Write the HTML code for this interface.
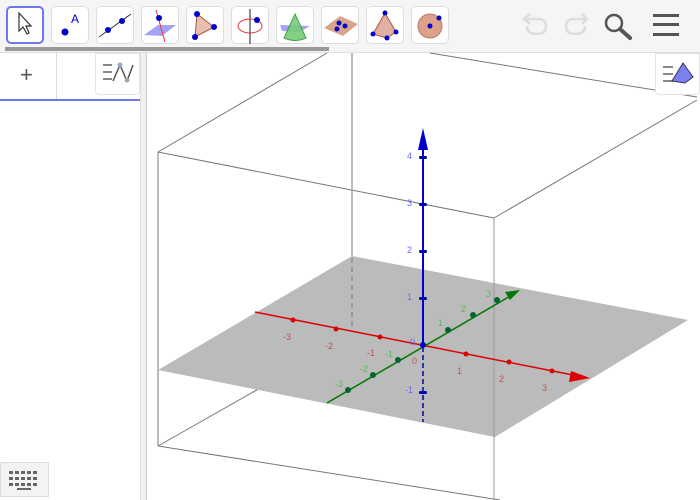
<!DOCTYPE html>
<html><head><style>
body{margin:0;width:700px;height:500px;overflow:hidden;background:#fff;font-family:"Liberation Sans",sans-serif;position:relative}
.tb{position:absolute;left:0;top:0;width:700px;height:52px;background:#f5f5f5;border-bottom:1px solid #ddd}
.btn{position:absolute;top:6px;width:38px;height:38px;background:#fff;border:1px solid #ddd;border-radius:5px;box-sizing:border-box}
</style></head><body>
<div class="tb"></div>
<div style="position:absolute;left:5px;top:47px;width:324px;height:4px;background:#999"></div>
<div class="btn" style="left:6px;border:2px solid #6d78f0"></div>
<div class="btn" style="left:51px"></div><div class="btn" style="left:96px"></div><div class="btn" style="left:141px"></div><div class="btn" style="left:186px"></div><div class="btn" style="left:231px"></div><div class="btn" style="left:276px"></div><div class="btn" style="left:321px"></div><div class="btn" style="left:366px"></div><div class="btn" style="left:411px"></div>
<svg style="position:absolute;left:0;top:0" width="700" height="52">
<path d="M19 13 L19 31 L23 27 L27 34 L29 33 L26 26 L31 26 Z" fill="#fff" stroke="#333" stroke-width="1.2"/>
<circle cx="65" cy="32" r="3.5" fill="#00c"/><text x="71" y="23" font-size="12" fill="#00c">A</text>
<line x1="99" y1="37" x2="131" y2="14" stroke="#333"/><circle cx="108" cy="30" r="3" fill="#00c"/><circle cx="122" cy="21" r="3" fill="#00c"/>
<path d="M144 35 L158 25 L176 25 L162 36Z" fill="#8a8ef0" opacity=".8"/><line x1="156" y1="10" x2="165" y2="42" stroke="#e33" stroke-width="1"/><circle cx="159" cy="18" r="3" fill="#00c"/>
<path d="M197 14 L214 27 L195 37Z" fill="#e8c0b0" stroke="#a54" /><circle cx="197" cy="14" r="3" fill="#00c"/><circle cx="214" cy="27" r="3" fill="#00c"/><circle cx="195" cy="37" r="3" fill="#00c"/>
<ellipse cx="250" cy="26" rx="12" ry="7" fill="none" stroke="#e33"/><line x1="250" y1="9" x2="250" y2="44" stroke="#666" stroke-width="1.5"/><circle cx="257" cy="20" r="3" fill="#00c"/>
<path d="M280 25 L310 26 L300 32 L282 31Z" fill="#8a8ef0" opacity=".8"/><path d="M295 14 L284 38 Q295 43 306 38Z" fill="#7c7" stroke="#393" opacity=".9"/>
<path d="M324 28 L340 16 L358 24 L343 36Z" fill="#d9a58a"/><circle cx="339" cy="23" r="2.5" fill="#00c"/><circle cx="345" cy="26" r="2.5" fill="#00c"/><circle cx="337" cy="29" r="2.5" fill="#00c"/>
<path d="M385 13 L373 34 L387 38 L396 32Z" fill="#e0b0a0" stroke="#a54"/><circle cx="385" cy="13" r="2.5" fill="#00c"/><circle cx="373" cy="34" r="2.5" fill="#00c"/><circle cx="387" cy="38" r="2.5" fill="#00c"/><circle cx="396" cy="32" r="2.5" fill="#00c"/>
<circle cx="430" cy="26" r="12" fill="#dda08a" stroke="#b76"/><circle cx="430" cy="26" r="2.5" fill="#00c"/><circle cx="439" cy="18" r="2.5" fill="#00c"/>
<path d="M527 26 Q527 34 537 34 Q546 34 546 26 Q546 19 537 19 L524 19 M530 14 L524 19 L530 24" fill="none" stroke="#ddd" stroke-width="2.5"/>
<path d="M585 26 Q585 34 575 34 Q566 34 566 26 Q566 19 575 19 L587 19 M582 14 L587 19 L582 24" fill="none" stroke="#ddd" stroke-width="2.5"/>
<circle cx="614" cy="23" r="8" fill="none" stroke="#555" stroke-width="2.5"/><line x1="620" y1="29" x2="630" y2="38" stroke="#555" stroke-width="4" stroke-linecap="round"/>
<rect x="653" y="14" width="26" height="3" fill="#555"/><rect x="653" y="23" width="26" height="3" fill="#555"/><rect x="653" y="33" width="26" height="3" fill="#555"/>
</svg>
<div style="position:absolute;left:0;top:99px;width:140px;height:2px;background:#6d78f0"></div>
<div style="position:absolute;left:56px;top:53px;width:1px;height:46px;background:#ddd"></div>
<div style="position:absolute;left:20px;top:62px;font-size:22px;color:#555">+</div>
<div style="position:absolute;left:95px;top:53px;width:45px;height:42px;background:#fff;border:1px solid #e4e4e4;border-radius:0 0 4px 4px;box-sizing:border-box"></div>
<svg style="position:absolute;left:95px;top:53px" width="45" height="42"><g stroke="#888" stroke-width="2"><line x1="8" y1="12" x2="17" y2="12"/><line x1="8" y1="19" x2="17" y2="19"/><line x1="8" y1="26" x2="17" y2="26"/></g><path d="M18 28 L25 12 L32 28 L38 12" fill="none" stroke="#555" stroke-width="1.5"/><circle cx="25" cy="12" r="2.5" fill="#9ab"/><circle cx="32" cy="27" r="2.5" fill="#9ab"/></svg>
<div style="position:absolute;left:140px;top:53px;width:7px;height:447px;background:#f0f0f0;border-left:1px solid #ddd;border-right:1px solid #ccc;box-sizing:border-box"></div>
<div style="position:absolute;left:0;top:462px;width:49px;height:35px;background:#f3f3f3;border:1px solid #ddd;box-sizing:border-box"></div>
<svg style="position:absolute;left:8px;top:470px" width="34" height="20"><g fill="#666"><rect x="1" y="1" width="4" height="3"/><rect x="7" y="1" width="4" height="3"/><rect x="13" y="1" width="4" height="3"/><rect x="19" y="1" width="4" height="3"/><rect x="25" y="1" width="4" height="3"/><rect x="1" y="7" width="4" height="3"/><rect x="7" y="7" width="4" height="3"/><rect x="13" y="7" width="4" height="3"/><rect x="19" y="7" width="4" height="3"/><rect x="25" y="7" width="4" height="3"/><rect x="1" y="13" width="4" height="3"/><rect x="7" y="13" width="4" height="3"/><rect x="13" y="13" width="4" height="3"/><rect x="19" y="13" width="4" height="3"/><rect x="25" y="13" width="4" height="3"/><rect x="9" y="18" width="14" height="2"/></g></svg>
<svg style="position:absolute;left:0;top:0" width="700" height="500">
<g stroke="#777" stroke-width="1" fill="none">
<line x1="158" y1="152" x2="327" y2="53"/>
<line x1="430" y1="53" x2="697" y2="97"/>
<line x1="158" y1="152" x2="494" y2="218"/>
<line x1="494" y1="218" x2="697" y2="100"/>
<line x1="158" y1="152" x2="158" y2="446"/>
<line x1="158" y1="446" x2="500" y2="500"/>
<line x1="158" y1="446" x2="350" y2="337"/>
</g>
<polygon points="158,370 352,256 688,320 495,437" fill="#bbb"/>
<line x1="352" y1="53" x2="352" y2="256" stroke="#999" stroke-width="1.3"/>
<line x1="352" y1="258" x2="352" y2="330" stroke="#888" stroke-width="1.3" stroke-dasharray="5,4"/>
<line x1="494" y1="218" x2="494" y2="500" stroke="#999" stroke-width="1"/>
<line x1="255" y1="312" x2="578" y2="376" stroke="#d00" stroke-width="1.5"/>
<polygon points="590,378 571,371 569,382" fill="#d00"/>
<g fill="#d00"><circle cx="293" cy="320" r="2.5"/><circle cx="336" cy="329" r="2.5"/><circle cx="380" cy="337" r="2.5"/><circle cx="466" cy="354" r="2.5"/><circle cx="509" cy="362" r="2.5"/><circle cx="552" cy="371" r="2.5"/></g>
<g fill="#b55" font-size="9"><text x="283" y="340">-3</text><text x="325" y="349">-2</text><text x="367" y="356">-1</text><text x="412" y="364">0</text><text x="457" y="374">1</text><text x="499" y="382">2</text><text x="542" y="391">3</text></g>
<line x1="327" y1="403" x2="512" y2="295" stroke="#070" stroke-width="1.5"/>
<polygon points="520,290 505,292 510,300" fill="#070"/>
<g fill="#063"><circle cx="348" cy="390" r="3"/><circle cx="373" cy="375" r="3"/><circle cx="398" cy="360" r="3"/><circle cx="448" cy="330" r="3"/><circle cx="473" cy="315" r="3"/><circle cx="497" cy="300" r="3"/></g>
<g fill="#5b5" font-size="9"><text x="335" y="387">-3</text><text x="360" y="372">-2</text><text x="385" y="357">-1</text><text x="438" y="326">1</text><text x="461" y="312">2</text><text x="486" y="297">3</text></g>
<line x1="423" y1="345" x2="423" y2="148" stroke="#00c" stroke-width="2"/>
<polygon points="423,128 418,150 428,150" fill="#00c"/>
<line x1="423" y1="347" x2="423" y2="422" stroke="#33a" stroke-width="2" stroke-dasharray="5,3"/>
<g fill="#00a"><rect x="419" y="156" width="8" height="3" rx="1.5"/><rect x="419" y="203" width="8" height="3" rx="1.5"/><rect x="419" y="250" width="8" height="3" rx="1.5"/><rect x="419" y="297" width="8" height="3" rx="1.5"/><rect x="419" y="391" width="8" height="3" rx="1.5"/></g>
<g fill="#66f" font-size="9"><text x="407" y="159">4</text><text x="407" y="206">3</text><text x="407" y="253">2</text><text x="407" y="300">1</text><text x="405" y="393">-1</text><text x="410" y="345">0</text></g>
<circle cx="423" cy="345" r="3" fill="#00c"/>
</svg>
<div style="position:absolute;left:655px;top:53px;width:45px;height:42px;background:#fff;border:1px solid #e4e4e4;border-radius:0 0 4px 4px;box-sizing:border-box"></div>
<svg style="position:absolute;left:655px;top:53px" width="45" height="42"><g stroke="#888" stroke-width="2"><line x1="8" y1="14" x2="18" y2="14"/><line x1="8" y1="21" x2="18" y2="21"/><line x1="8" y1="28" x2="18" y2="28"/></g><path d="M28 10 L17 28 L30 30 L38 24Z" fill="#7a80f0" stroke="#335"/></svg>
</body></html>
